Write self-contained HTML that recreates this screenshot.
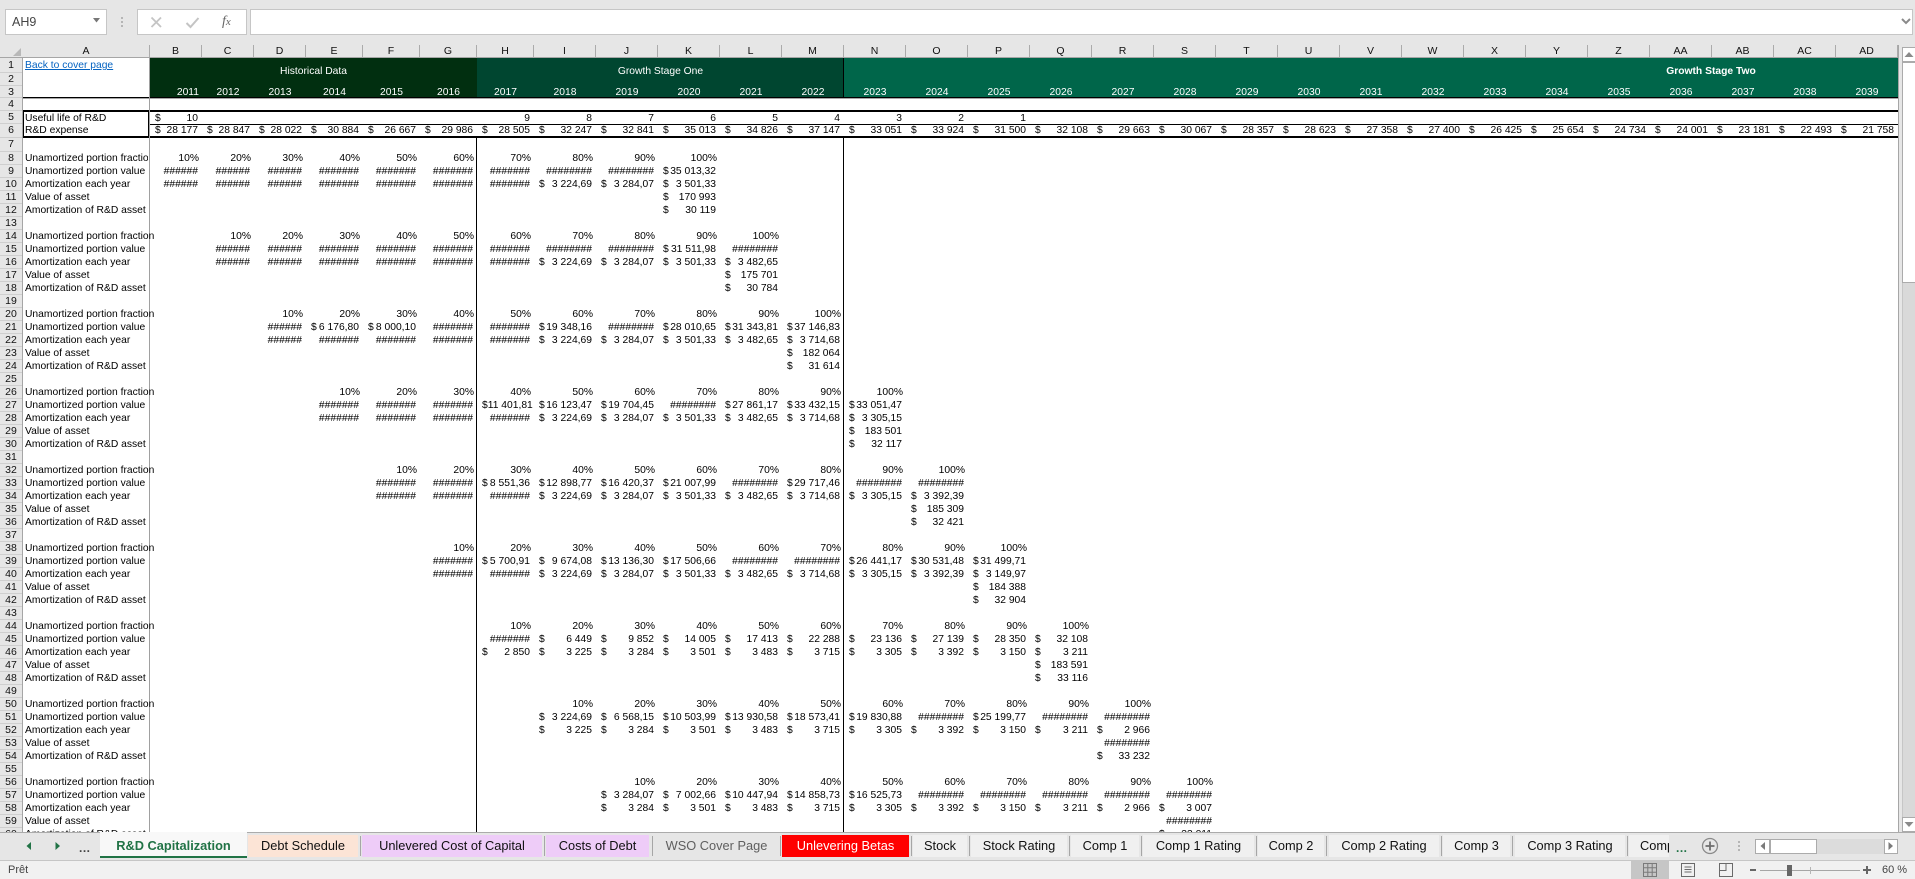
<!DOCTYPE html>
<html lang="fr"><head><meta charset="utf-8"><title>R&amp;D Capitalization</title>
<style>
html,body{margin:0;padding:0;width:1915px;height:879px;overflow:hidden;background:#fff}
body{font-family:"Liberation Sans",Arial,sans-serif;position:relative;color:#000}
.a{position:absolute}
#top{left:0;top:0;width:1915px;height:58px;background:#e6e6e6}
.box{position:absolute;background:#fff;border:1px solid #c6c6c6;box-sizing:border-box}
.h{position:absolute;top:45px;height:12px;line-height:13px;font-size:10.5px;text-align:center;border-right:1px solid #ababab;box-sizing:border-box;color:#111}
#sheet{left:23px;top:58px;width:1875px;height:774px;overflow:hidden;background:#fff}
#rh{left:0;top:58px;width:23px;height:774px;background:#e6e6e6;border-right:1px solid #a6a6a6;box-sizing:border-box;overflow:hidden}
#rh div{position:absolute;left:0;width:22px;text-align:center;font-size:10.5px;border-bottom:1px solid #cfcfcf;box-sizing:border-box;color:#111}
#rh section{position:absolute;left:0;top:1px;width:22px;height:773px}
.g{position:absolute;font-size:10.3px;color:#fff;text-align:center;line-height:13px}
.yr{position:absolute;top:87px;height:11px;line-height:11px;font-size:10.3px;color:#fff;text-align:center}
#grid{position:absolute;left:0;top:94px;width:1915px}
.r{position:relative;height:13px}
.r b,.t b{font-weight:normal;position:absolute;top:0;height:13px;line-height:13px;font-size:10.3px;text-align:right;padding-right:4px;padding-left:5px;box-sizing:border-box;white-space:nowrap;overflow:hidden}
.q b{padding-right:3px}
i{font-style:normal;float:left}
.l{position:absolute;left:25px;top:0;font-size:10.3px;line-height:13px;white-space:nowrap;z-index:3}
.c{width:123px;overflow:hidden}
.B{left:150px;width:52px}.C{left:202px;width:52px}.D{left:254px;width:52px}.E{left:306px;width:57px}.F{left:363px;width:57px}.G{left:420px;width:57px}.H{left:477px;width:57px}
.I{left:534px;width:62px}.J{left:596px;width:62px}.K{left:658px;width:62px}.L{left:720px;width:62px}.M{left:782px;width:62px}.N{left:844px;width:62px}.O{left:906px;width:62px}.P{left:968px;width:62px}.Q{left:1030px;width:62px}.R{left:1092px;width:62px}.S{left:1154px;width:62px}.T{left:1216px;width:62px}.U{left:1278px;width:62px}.V{left:1340px;width:62px}.W{left:1402px;width:62px}.X{left:1464px;width:62px}.Y{left:1526px;width:62px}.Z{left:1588px;width:62px}.AA{left:1650px;width:62px}.AB{left:1712px;width:62px}.AC{left:1774px;width:62px}.AD{left:1836px;width:62px}
.tab{position:absolute;top:835px;height:22px;line-height:22px;font-size:12.8px;text-align:center;white-space:nowrap;background:#f0f0f0;color:#111}
.sep{position:absolute;top:836px;height:20px;width:1px;background:#a6a6a6}
</style></head><body>

<div class="a" id="top"></div>
<div class="box" style="left:5px;top:9px;width:102px;height:26px"></div>
<div class="a" style="left:12px;top:14px;font-size:12.5px;line-height:16px;color:#444">AH9</div>
<svg class="a" style="left:92px;top:18px" width="10" height="6"><path d="M1 0h7L4.500 4.500z" fill="#777"/></svg>
<svg class="a" style="left:120px;top:16px" width="4" height="12"><path d="M1 1h2v2H1zM1 5h2v2H1zM1 9h2v2H1z" fill="#b5b5b5"/></svg>
<div class="box" style="left:137px;top:9px;width:110px;height:26px"></div>
<svg class="a" style="left:150px;top:16px" width="13" height="13"><path d="M1.500 1.500l9.500 9.500M11 1.500L1.500 11" stroke="#c4c4c4" stroke-width="1.800" fill="none"/></svg>
<svg class="a" style="left:185px;top:16px" width="15" height="13"><path d="M1.500 7l4 4L13.500 2" stroke="#c4c4c4" stroke-width="2" fill="none"/></svg>
<div class="a" style="left:222px;top:13px;font-family:'Liberation Serif',serif;font-style:italic;font-size:14px;line-height:18px;color:#666">f<span style="font-size:11px">x</span></div>
<div class="box" style="left:250px;top:9px;width:1663px;height:26px"></div>
<svg class="a" style="left:1901px;top:18px" width="10" height="8"><path d="M1 1l4 4 4-4" stroke="#8a8a8a" stroke-width="2" fill="none"/></svg>

<svg class="a" style="left:13px;top:48px" width="8" height="8"><path d="M8 0v8H0z" fill="#b8b8b8"/></svg>
<div class="h" style="left:23px;width:127px">A</div>
<div class="h B">B</div><div class="h C">C</div><div class="h D">D</div><div class="h E">E</div><div class="h F">F</div><div class="h G">G</div><div class="h H">H</div><div class="h I">I</div><div class="h J">J</div><div class="h K">K</div><div class="h L">L</div><div class="h M">M</div><div class="h N">N</div><div class="h O">O</div><div class="h P">P</div><div class="h Q">Q</div><div class="h R">R</div><div class="h S">S</div><div class="h T">T</div><div class="h U">U</div><div class="h V">V</div><div class="h W">W</div><div class="h X">X</div><div class="h Y">Y</div><div class="h Z">Z</div><div class="h AA">AA</div><div class="h AB">AB</div><div class="h AC">AC</div><div class="h AD">AD</div>
<div class="a" style="left:0;top:57px;width:1898px;height:1px;background:#a6a6a6"></div>

<div class="a" id="sheet"></div>
<!-- header bands -->
<div class="a" style="left:150px;top:58px;width:327px;height:39px;background:#012f10"></div>
<div class="a" style="left:477px;top:58px;width:367px;height:39px;background:#004630"></div>
<div class="a" style="left:844px;top:58px;width:1054px;height:39px;background:#00664a"></div>
<div class="a" style="left:843px;top:58px;width:1px;height:39px;background:#000"></div>
<div class="g" style="left:150px;top:65px;width:327px">Historical Data</div>
<div class="g" style="left:477px;top:65px;width:367px">Growth Stage One</div>
<div class="g" style="left:1561px;top:65px;width:300px;font-weight:bold">Growth Stage Two</div>
<div class="yr B" style="text-align:right;padding-right:3px;box-sizing:border-box">2011</div><div class="yr C">2012</div><div class="yr D">2013</div><div class="yr E">2014</div><div class="yr F">2015</div><div class="yr G">2016</div><div class="yr H">2017</div><div class="yr I">2018</div><div class="yr J">2019</div><div class="yr K">2020</div><div class="yr L">2021</div><div class="yr M">2022</div><div class="yr N">2023</div><div class="yr O">2024</div><div class="yr P">2025</div><div class="yr Q">2026</div><div class="yr R">2027</div><div class="yr S">2028</div><div class="yr T">2029</div><div class="yr U">2030</div><div class="yr V">2031</div><div class="yr W">2032</div><div class="yr X">2033</div><div class="yr Y">2034</div><div class="yr Z">2035</div><div class="yr AA">2036</div><div class="yr AB">2037</div><div class="yr AC">2038</div><div class="yr AD">2039</div>
<a class="a" style="left:25px;top:59px;font-size:10.3px;line-height:13px;color:#0563c1;text-decoration:underline">Back to cover page </a>
<div class="a" style="left:23px;top:97px;width:1875px;height:1px;background:#000"></div>
<div class="a" style="left:23px;top:98px;width:1875px;height:1px;background:#a6a6a6"></div>
<!-- row 5-6 box -->
<div class="a" style="left:23px;top:110px;width:1875px;height:2px;background:#000"></div>
<div class="a" style="left:149px;top:124px;width:1749px;height:1px;background:#000"></div>
<div class="a" style="left:23px;top:136px;width:1875px;height:2px;background:#000"></div>
<div class="a" style="left:23px;top:110px;width:1px;height:28px;background:#000"></div>
<div class="a" style="left:148px;top:110px;width:1px;height:28px;background:#000"></div>
<div class="a" style="left:149px;top:58px;width:1px;height:774px;background:#a0a0a0"></div>
<div class="a" style="left:476px;top:137px;width:1px;height:695px;background:#000"></div>
<div class="a" style="left:843px;top:137px;width:1px;height:695px;background:#000"></div>

<div class="t a" style="left:0;top:112px;width:1915px;height:13px"><span class="l">Useful life of R&amp;D</span><b class="B"><i>$</i>10</b><b class="H">9</b><b class="I">8</b><b class="J">7</b><b class="K">6</b><b class="L">5</b><b class="M">4</b><b class="N">3</b><b class="O">2</b><b class="P">1</b></div>
<div class="t a" style="left:0;top:124px;width:1915px;height:13px"><span class="l">R&amp;D expense</span><b class="B"><i>$</i>28 177</b><b class="C"><i>$</i>28 847</b><b class="D"><i>$</i>28 022</b><b class="E"><i>$</i>30 884</b><b class="F"><i>$</i>26 667</b><b class="G"><i>$</i>29 986</b><b class="H"><i>$</i>28 505</b><b class="I"><i>$</i>32 247</b><b class="J"><i>$</i>32 841</b><b class="K"><i>$</i>35 013</b><b class="L"><i>$</i>34 826</b><b class="M"><i>$</i>37 147</b><b class="N"><i>$</i>33 051</b><b class="O"><i>$</i>33 924</b><b class="P"><i>$</i>31 500</b><b class="Q"><i>$</i>32 108</b><b class="R"><i>$</i>29 663</b><b class="S"><i>$</i>30 067</b><b class="T"><i>$</i>28 357</b><b class="U"><i>$</i>28 623</b><b class="V"><i>$</i>27 358</b><b class="W"><i>$</i>27 400</b><b class="X"><i>$</i>26 425</b><b class="Y"><i>$</i>25 654</b><b class="Z"><i>$</i>24 734</b><b class="AA"><i>$</i>24 001</b><b class="AB"><i>$</i>23 181</b><b class="AC"><i>$</i>22 493</b><b class="AD"><i>$</i>21 758</b></div>

<div class="a" style="left:0;top:58px;width:1898px;height:774px;overflow:hidden">
<div id="grid">
<div class="r q"><span class="l c">Unamortized portion fraction</span><b class="B">10%</b><b class="C">20%</b><b class="D">30%</b><b class="E">40%</b><b class="F">50%</b><b class="G">60%</b><b class="H">70%</b><b class="I">80%</b><b class="J">90%</b><b class="K">100%</b></div>
<div class="r"><span class="l">Unamortized portion value</span><b class="B">######</b><b class="C">######</b><b class="D">######</b><b class="E">#######</b><b class="F">#######</b><b class="G">#######</b><b class="H">#######</b><b class="I">########</b><b class="J">########</b><b class="K"><i>$</i>35 013,32</b></div>
<div class="r"><span class="l">Amortization each year</span><b class="B">######</b><b class="C">######</b><b class="D">######</b><b class="E">#######</b><b class="F">#######</b><b class="G">#######</b><b class="H">#######</b><b class="I"><i>$</i>3 224,69</b><b class="J"><i>$</i>3 284,07</b><b class="K"><i>$</i>3 501,33</b></div>
<div class="r"><span class="l">Value of asset</span><b class="K"><i>$</i>170 993</b></div>
<div class="r"><span class="l">Amortization of R&amp;D asset</span><b class="K"><i>$</i>30 119</b></div>
<div class="r"></div>
<div class="r q"><span class="l">Unamortized portion fraction</span><b class="C">10%</b><b class="D">20%</b><b class="E">30%</b><b class="F">40%</b><b class="G">50%</b><b class="H">60%</b><b class="I">70%</b><b class="J">80%</b><b class="K">90%</b><b class="L">100%</b></div>
<div class="r"><span class="l">Unamortized portion value</span><b class="C">######</b><b class="D">######</b><b class="E">#######</b><b class="F">#######</b><b class="G">#######</b><b class="H">#######</b><b class="I">########</b><b class="J">########</b><b class="K"><i>$</i>31 511,98</b><b class="L">########</b></div>
<div class="r"><span class="l">Amortization each year</span><b class="C">######</b><b class="D">######</b><b class="E">#######</b><b class="F">#######</b><b class="G">#######</b><b class="H">#######</b><b class="I"><i>$</i>3 224,69</b><b class="J"><i>$</i>3 284,07</b><b class="K"><i>$</i>3 501,33</b><b class="L"><i>$</i>3 482,65</b></div>
<div class="r"><span class="l">Value of asset</span><b class="L"><i>$</i>175 701</b></div>
<div class="r"><span class="l">Amortization of R&amp;D asset</span><b class="L"><i>$</i>30 784</b></div>
<div class="r"></div>
<div class="r q"><span class="l">Unamortized portion fraction</span><b class="D">10%</b><b class="E">20%</b><b class="F">30%</b><b class="G">40%</b><b class="H">50%</b><b class="I">60%</b><b class="J">70%</b><b class="K">80%</b><b class="L">90%</b><b class="M">100%</b></div>
<div class="r"><span class="l">Unamortized portion value</span><b class="D">######</b><b class="E"><i>$</i>6 176,80</b><b class="F"><i>$</i>8 000,10</b><b class="G">#######</b><b class="H">#######</b><b class="I"><i>$</i>19 348,16</b><b class="J">########</b><b class="K"><i>$</i>28 010,65</b><b class="L"><i>$</i>31 343,81</b><b class="M"><i>$</i>37 146,83</b></div>
<div class="r"><span class="l">Amortization each year</span><b class="D">######</b><b class="E">#######</b><b class="F">#######</b><b class="G">#######</b><b class="H">#######</b><b class="I"><i>$</i>3 224,69</b><b class="J"><i>$</i>3 284,07</b><b class="K"><i>$</i>3 501,33</b><b class="L"><i>$</i>3 482,65</b><b class="M"><i>$</i>3 714,68</b></div>
<div class="r"><span class="l">Value of asset</span><b class="M"><i>$</i>182 064</b></div>
<div class="r"><span class="l">Amortization of R&amp;D asset</span><b class="M"><i>$</i>31 614</b></div>
<div class="r"></div>
<div class="r q"><span class="l">Unamortized portion fraction</span><b class="E">10%</b><b class="F">20%</b><b class="G">30%</b><b class="H">40%</b><b class="I">50%</b><b class="J">60%</b><b class="K">70%</b><b class="L">80%</b><b class="M">90%</b><b class="N">100%</b></div>
<div class="r"><span class="l">Unamortized portion value</span><b class="E">#######</b><b class="F">#######</b><b class="G">#######</b><b class="H"><i>$</i>11 401,81</b><b class="I"><i>$</i>16 123,47</b><b class="J"><i>$</i>19 704,45</b><b class="K">########</b><b class="L"><i>$</i>27 861,17</b><b class="M"><i>$</i>33 432,15</b><b class="N"><i>$</i>33 051,47</b></div>
<div class="r"><span class="l">Amortization each year</span><b class="E">#######</b><b class="F">#######</b><b class="G">#######</b><b class="H">#######</b><b class="I"><i>$</i>3 224,69</b><b class="J"><i>$</i>3 284,07</b><b class="K"><i>$</i>3 501,33</b><b class="L"><i>$</i>3 482,65</b><b class="M"><i>$</i>3 714,68</b><b class="N"><i>$</i>3 305,15</b></div>
<div class="r"><span class="l">Value of asset</span><b class="N"><i>$</i>183 501</b></div>
<div class="r"><span class="l">Amortization of R&amp;D asset</span><b class="N"><i>$</i>32 117</b></div>
<div class="r"></div>
<div class="r q"><span class="l">Unamortized portion fraction</span><b class="F">10%</b><b class="G">20%</b><b class="H">30%</b><b class="I">40%</b><b class="J">50%</b><b class="K">60%</b><b class="L">70%</b><b class="M">80%</b><b class="N">90%</b><b class="O">100%</b></div>
<div class="r"><span class="l">Unamortized portion value</span><b class="F">#######</b><b class="G">#######</b><b class="H"><i>$</i>8 551,36</b><b class="I"><i>$</i>12 898,77</b><b class="J"><i>$</i>16 420,37</b><b class="K"><i>$</i>21 007,99</b><b class="L">########</b><b class="M"><i>$</i>29 717,46</b><b class="N">########</b><b class="O">########</b></div>
<div class="r"><span class="l">Amortization each year</span><b class="F">#######</b><b class="G">#######</b><b class="H">#######</b><b class="I"><i>$</i>3 224,69</b><b class="J"><i>$</i>3 284,07</b><b class="K"><i>$</i>3 501,33</b><b class="L"><i>$</i>3 482,65</b><b class="M"><i>$</i>3 714,68</b><b class="N"><i>$</i>3 305,15</b><b class="O"><i>$</i>3 392,39</b></div>
<div class="r"><span class="l">Value of asset</span><b class="O"><i>$</i>185 309</b></div>
<div class="r"><span class="l">Amortization of R&amp;D asset</span><b class="O"><i>$</i>32 421</b></div>
<div class="r"></div>
<div class="r q"><span class="l">Unamortized portion fraction</span><b class="G">10%</b><b class="H">20%</b><b class="I">30%</b><b class="J">40%</b><b class="K">50%</b><b class="L">60%</b><b class="M">70%</b><b class="N">80%</b><b class="O">90%</b><b class="P">100%</b></div>
<div class="r"><span class="l">Unamortized portion value</span><b class="G">#######</b><b class="H"><i>$</i>5 700,91</b><b class="I"><i>$</i>9 674,08</b><b class="J"><i>$</i>13 136,30</b><b class="K"><i>$</i>17 506,66</b><b class="L">########</b><b class="M">########</b><b class="N"><i>$</i>26 441,17</b><b class="O"><i>$</i>30 531,48</b><b class="P"><i>$</i>31 499,71</b></div>
<div class="r"><span class="l">Amortization each year</span><b class="G">#######</b><b class="H">#######</b><b class="I"><i>$</i>3 224,69</b><b class="J"><i>$</i>3 284,07</b><b class="K"><i>$</i>3 501,33</b><b class="L"><i>$</i>3 482,65</b><b class="M"><i>$</i>3 714,68</b><b class="N"><i>$</i>3 305,15</b><b class="O"><i>$</i>3 392,39</b><b class="P"><i>$</i>3 149,97</b></div>
<div class="r"><span class="l">Value of asset</span><b class="P"><i>$</i>184 388</b></div>
<div class="r"><span class="l">Amortization of R&amp;D asset</span><b class="P"><i>$</i>32 904</b></div>
<div class="r"></div>
<div class="r q"><span class="l">Unamortized portion fraction</span><b class="H">10%</b><b class="I">20%</b><b class="J">30%</b><b class="K">40%</b><b class="L">50%</b><b class="M">60%</b><b class="N">70%</b><b class="O">80%</b><b class="P">90%</b><b class="Q">100%</b></div>
<div class="r"><span class="l">Unamortized portion value</span><b class="H">#######</b><b class="I"><i>$</i>6 449</b><b class="J"><i>$</i>9 852</b><b class="K"><i>$</i>14 005</b><b class="L"><i>$</i>17 413</b><b class="M"><i>$</i>22 288</b><b class="N"><i>$</i>23 136</b><b class="O"><i>$</i>27 139</b><b class="P"><i>$</i>28 350</b><b class="Q"><i>$</i>32 108</b></div>
<div class="r"><span class="l">Amortization each year</span><b class="H"><i>$</i>2 850</b><b class="I"><i>$</i>3 225</b><b class="J"><i>$</i>3 284</b><b class="K"><i>$</i>3 501</b><b class="L"><i>$</i>3 483</b><b class="M"><i>$</i>3 715</b><b class="N"><i>$</i>3 305</b><b class="O"><i>$</i>3 392</b><b class="P"><i>$</i>3 150</b><b class="Q"><i>$</i>3 211</b></div>
<div class="r"><span class="l">Value of asset</span><b class="Q"><i>$</i>183 591</b></div>
<div class="r"><span class="l">Amortization of R&amp;D asset</span><b class="Q"><i>$</i>33 116</b></div>
<div class="r"></div>
<div class="r q"><span class="l">Unamortized portion fraction</span><b class="I">10%</b><b class="J">20%</b><b class="K">30%</b><b class="L">40%</b><b class="M">50%</b><b class="N">60%</b><b class="O">70%</b><b class="P">80%</b><b class="Q">90%</b><b class="R">100%</b></div>
<div class="r"><span class="l">Unamortized portion value</span><b class="I"><i>$</i>3 224,69</b><b class="J"><i>$</i>6 568,15</b><b class="K"><i>$</i>10 503,99</b><b class="L"><i>$</i>13 930,58</b><b class="M"><i>$</i>18 573,41</b><b class="N"><i>$</i>19 830,88</b><b class="O">########</b><b class="P"><i>$</i>25 199,77</b><b class="Q">########</b><b class="R">########</b></div>
<div class="r"><span class="l">Amortization each year</span><b class="I"><i>$</i>3 225</b><b class="J"><i>$</i>3 284</b><b class="K"><i>$</i>3 501</b><b class="L"><i>$</i>3 483</b><b class="M"><i>$</i>3 715</b><b class="N"><i>$</i>3 305</b><b class="O"><i>$</i>3 392</b><b class="P"><i>$</i>3 150</b><b class="Q"><i>$</i>3 211</b><b class="R"><i>$</i>2 966</b></div>
<div class="r"><span class="l">Value of asset</span><b class="R">########</b></div>
<div class="r"><span class="l">Amortization of R&amp;D asset</span><b class="R"><i>$</i>33 232</b></div>
<div class="r"></div>
<div class="r q"><span class="l">Unamortized portion fraction</span><b class="J">10%</b><b class="K">20%</b><b class="L">30%</b><b class="M">40%</b><b class="N">50%</b><b class="O">60%</b><b class="P">70%</b><b class="Q">80%</b><b class="R">90%</b><b class="S">100%</b></div>
<div class="r"><span class="l">Unamortized portion value</span><b class="J"><i>$</i>3 284,07</b><b class="K"><i>$</i>7 002,66</b><b class="L"><i>$</i>10 447,94</b><b class="M"><i>$</i>14 858,73</b><b class="N"><i>$</i>16 525,73</b><b class="O">########</b><b class="P">########</b><b class="Q">########</b><b class="R">########</b><b class="S">########</b></div>
<div class="r"><span class="l">Amortization each year</span><b class="J"><i>$</i>3 284</b><b class="K"><i>$</i>3 501</b><b class="L"><i>$</i>3 483</b><b class="M"><i>$</i>3 715</b><b class="N"><i>$</i>3 305</b><b class="O"><i>$</i>3 392</b><b class="P"><i>$</i>3 150</b><b class="Q"><i>$</i>3 211</b><b class="R"><i>$</i>2 966</b><b class="S"><i>$</i>3 007</b></div>
<div class="r"><span class="l">Value of asset</span><b class="S">########</b></div>
<div class="r"><span class="l">Amortization of R&amp;D asset</span><b class="S"><i>$</i>33 011</b></div>
</div></div>

<!-- row header -->
<div class="a" id="rh">
<div style="top:0;height:15px;line-height:15px">1</div><div style="top:15px;height:13px;line-height:13px">2</div><div style="top:28px;height:12px;line-height:12px">3</div><div style="top:40px;height:13px;line-height:13px">4</div><div style="top:53px;height:13px;line-height:13px">5</div><div style="top:66px;height:14px;line-height:13px">6</div><div style="top:80px;height:14px;line-height:13px">7</div>
<section>
<div style="top:93px;height:13px;line-height:13px">8</div><div style="top:106px;height:13px;line-height:13px">9</div><div style="top:119px;height:13px;line-height:13px">10</div><div style="top:132px;height:13px;line-height:13px">11</div><div style="top:145px;height:13px;line-height:13px">12</div><div style="top:158px;height:13px;line-height:13px">13</div><div style="top:171px;height:13px;line-height:13px">14</div><div style="top:184px;height:13px;line-height:13px">15</div><div style="top:197px;height:13px;line-height:13px">16</div><div style="top:210px;height:13px;line-height:13px">17</div><div style="top:223px;height:13px;line-height:13px">18</div><div style="top:236px;height:13px;line-height:13px">19</div><div style="top:249px;height:13px;line-height:13px">20</div><div style="top:262px;height:13px;line-height:13px">21</div><div style="top:275px;height:13px;line-height:13px">22</div><div style="top:288px;height:13px;line-height:13px">23</div><div style="top:301px;height:13px;line-height:13px">24</div><div style="top:314px;height:13px;line-height:13px">25</div><div style="top:327px;height:13px;line-height:13px">26</div><div style="top:340px;height:13px;line-height:13px">27</div><div style="top:353px;height:13px;line-height:13px">28</div><div style="top:366px;height:13px;line-height:13px">29</div><div style="top:379px;height:13px;line-height:13px">30</div><div style="top:392px;height:13px;line-height:13px">31</div><div style="top:405px;height:13px;line-height:13px">32</div><div style="top:418px;height:13px;line-height:13px">33</div><div style="top:431px;height:13px;line-height:13px">34</div><div style="top:444px;height:13px;line-height:13px">35</div><div style="top:457px;height:13px;line-height:13px">36</div><div style="top:470px;height:13px;line-height:13px">37</div><div style="top:483px;height:13px;line-height:13px">38</div><div style="top:496px;height:13px;line-height:13px">39</div><div style="top:509px;height:13px;line-height:13px">40</div><div style="top:522px;height:13px;line-height:13px">41</div><div style="top:535px;height:13px;line-height:13px">42</div><div style="top:548px;height:13px;line-height:13px">43</div><div style="top:561px;height:13px;line-height:13px">44</div><div style="top:574px;height:13px;line-height:13px">45</div><div style="top:587px;height:13px;line-height:13px">46</div><div style="top:600px;height:13px;line-height:13px">47</div><div style="top:613px;height:13px;line-height:13px">48</div><div style="top:626px;height:13px;line-height:13px">49</div><div style="top:639px;height:13px;line-height:13px">50</div><div style="top:652px;height:13px;line-height:13px">51</div><div style="top:665px;height:13px;line-height:13px">52</div><div style="top:678px;height:13px;line-height:13px">53</div><div style="top:691px;height:13px;line-height:13px">54</div><div style="top:704px;height:13px;line-height:13px">55</div><div style="top:717px;height:13px;line-height:13px">56</div><div style="top:730px;height:13px;line-height:13px">57</div><div style="top:743px;height:13px;line-height:13px">58</div><div style="top:756px;height:13px;line-height:13px">59</div><div style="top:769px;height:13px;line-height:13px">60</div>
</section>
</div>

<!-- vertical scrollbar -->
<div class="a" style="left:1898px;top:45px;width:17px;height:787px;background:#e6e6e6;border-left:1px solid #a6a6a6;box-sizing:border-box"></div>
<div class="a" style="left:1902px;top:47px;width:13px;height:15px;background:#fff;border:1px solid #ababab;border-right:0;box-sizing:border-box"></div>
<svg class="a" style="left:1904px;top:52px" width="10" height="6"><path d="M5 0l4.500 5H.500z" fill="#8a8a8a"/></svg>
<div class="a" style="left:1902px;top:62px;width:13px;height:221px;background:#fff;border:1px solid #ababab;border-right:0;box-sizing:border-box"></div>
<div class="a" style="left:1902px;top:283px;width:13px;height:534px;background:#d9d9d9;border-left:1px solid #c6c6c6;box-sizing:border-box"></div>
<div class="a" style="left:1902px;top:817px;width:13px;height:15px;background:#fff;border:1px solid #ababab;border-right:0;box-sizing:border-box"></div>
<svg class="a" style="left:1904px;top:822px" width="10" height="6"><path d="M.500 0h9L5 5z" fill="#8a8a8a"/></svg>

<!-- tab bar -->
<div class="a" style="left:0;top:832px;width:1915px;height:29px;background:#e6e6e6;border-top:1px solid #ababab;border-bottom:1px solid #c6c6c6;box-sizing:border-box"></div>
<svg class="a" style="left:26px;top:842px" width="6" height="9"><path d="M5 0v8L.500 4z" fill="#217346"/></svg>
<svg class="a" style="left:55px;top:842px" width="6" height="9"><path d="M.500 0v8L5 4z" fill="#217346"/></svg>
<div class="a" style="left:79px;top:843px;width:16px;font-size:12px;line-height:10px;font-weight:bold;color:#444;letter-spacing:.5px">...</div>
<div class="tab" style="left:100px;top:832px;width:147px;height:24px;line-height:27px;background:#f8f8f8;color:#217346;font-weight:bold;border-bottom:2px solid #217346;box-sizing:content-box">R&amp;D Capitalization</div>
<div class="tab" style="left:248px;width:110px;background:#fce4d6">Debt Schedule</div><div class="sep" style="left:360px"></div>
<div class="tab" style="left:362px;width:180px;background:#eeccf8">Unlevered Cost of Capital</div><div class="sep" style="left:544px"></div>
<div class="tab" style="left:546px;width:103px;background:#eeccf8">Costs of Debt</div><div class="sep" style="left:652px"></div>
<div class="tab" style="left:654px;width:125px;background:#e6e6e6;color:#5f5f5f">WSO Cover Page</div><div class="sep" style="left:780px"></div>
<div class="tab" style="left:782px;width:127px;background:#ff0000;color:#fff">Unlevering Betas</div><div class="sep" style="left:911px"></div>
<div class="tab" style="left:913px;width:54px">Stock</div><div class="sep" style="left:969px"></div>
<div class="tab" style="left:971px;width:96px">Stock Rating</div><div class="sep" style="left:1069px"></div>
<div class="tab" style="left:1071px;width:68px">Comp 1</div><div class="sep" style="left:1141px"></div>
<div class="tab" style="left:1143px;width:111px">Comp 1 Rating</div><div class="sep" style="left:1256px"></div>
<div class="tab" style="left:1258px;width:66px">Comp 2</div><div class="sep" style="left:1326px"></div>
<div class="tab" style="left:1329px;width:110px">Comp 2 Rating</div><div class="sep" style="left:1441px"></div>
<div class="tab" style="left:1443px;width:67px">Comp 3</div><div class="sep" style="left:1512px"></div>
<div class="tab" style="left:1515px;width:110px">Comp 3 Rating</div><div class="sep" style="left:1627px"></div>
<div class="tab" style="left:1629px;width:40px;overflow:hidden;text-align:left"><span style="margin-left:11px">Comp 4</span></div>
<div class="a" style="left:1676px;top:843px;width:16px;font-size:12px;line-height:10px;font-weight:bold;color:#217346;letter-spacing:.5px">...</div>
<svg class="a" style="left:1701px;top:837px" width="18" height="18"><circle cx="9" cy="9" r="7.500" fill="none" stroke="#8a8a8a" stroke-width="1.300"/><path d="M9 4.500v9M4.500 9h9" stroke="#6e6e6e" stroke-width="1.800"/></svg>
<svg class="a" style="left:1737px;top:840px" width="4" height="12"><path d="M1 1h2v2H1zM1 5h2v2H1zM1 9h2v2H1z" fill="#b5b5b5"/></svg>
<div class="a" style="left:1755px;top:839px;width:143px;height:15px;background:#dcdcdc"></div>
<div class="a" style="left:1755px;top:839px;width:15px;height:15px;background:#fff;border:1px solid #ababab;box-sizing:border-box"></div>
<svg class="a" style="left:1760px;top:842px" width="6" height="9"><path d="M5 0v8L.500 4z" fill="#7a7a7a"/></svg>
<div class="a" style="left:1770px;top:839px;width:47px;height:15px;background:#fff;border:1px solid #ababab;box-sizing:border-box"></div>
<div class="a" style="left:1884px;top:839px;width:14px;height:15px;background:#fff;border:1px solid #ababab;box-sizing:border-box"></div>
<svg class="a" style="left:1888px;top:842px" width="6" height="9"><path d="M.500 0v8L5 4z" fill="#7a7a7a"/></svg>

<!-- status bar -->
<div class="a" style="left:0;top:861px;width:1915px;height:18px;background:#f1f1f1"></div>
<div class="a" style="left:8px;top:863px;font-size:11px;line-height:14px;color:#444">Prêt</div>
<div class="a" style="left:1631px;top:861px;width:38px;height:18px;background:#c6c6c6"></div>
<svg class="a" style="left:1643px;top:863px" width="14" height="14"><path d="M.500.500h13v13H.500zM4.800.500v13M9.200.500v13M.500 4.800h13M.500 9.200h13" fill="none" stroke="#7a7a7a"/></svg>
<svg class="a" style="left:1681px;top:863px" width="14" height="14"><path d="M.500.500h13v13H.500z" fill="none" stroke="#6a6a6a"/><path d="M3.500 4h7M3.500 6.500h7M3.500 9h7" stroke="#6a6a6a"/></svg>
<svg class="a" style="left:1719px;top:863px" width="14" height="14"><path d="M.500.500h13v13H.500zM.500 7.500h6.500V.500" fill="none" stroke="#6a6a6a"/></svg>
<div class="a" style="left:1750px;top:869px;width:6px;height:2px;background:#666"></div>
<div class="a" style="left:1760px;top:870px;width:100px;height:1px;background:#a6a6a6"></div>
<div class="a" style="left:1810px;top:867px;width:1px;height:7px;background:#b5b5b5"></div>
<div class="a" style="left:1787px;top:865px;width:5px;height:11px;background:#666"></div>
<svg class="a" style="left:1863px;top:866px" width="8" height="8"><path d="M4 0v8M0 4h8" stroke="#666" stroke-width="2"/></svg>
<div class="a" style="left:1882px;top:863px;font-size:11px;line-height:14px;color:#444">60 %</div>
</body></html>
